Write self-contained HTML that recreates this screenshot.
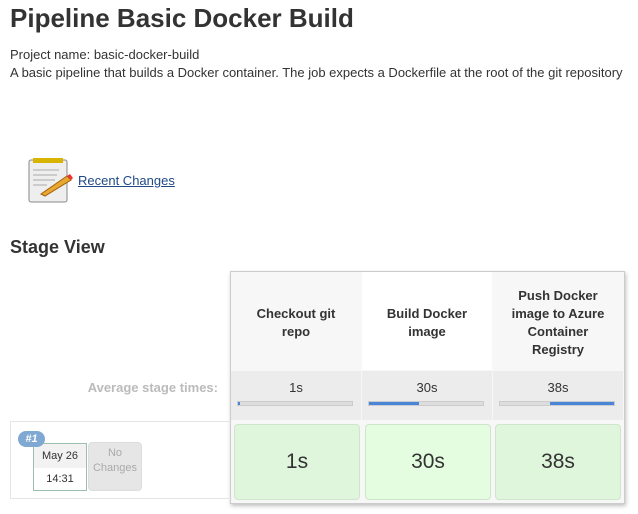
<!DOCTYPE html>
<html><head><style>
body{margin:0;width:638px;height:514px;background:#fff;font-family:"Liberation Sans",sans-serif;color:#333;position:relative;overflow:hidden}
.a{position:absolute}
h1{position:absolute;left:10px;top:3px;margin:0;font-size:26px;font-weight:bold;white-space:nowrap}
.t{font-size:13px;white-space:nowrap;left:10px}
.hd{position:absolute;top:274px;height:98px;width:130px;font-size:13px;font-weight:bold;text-align:center;display:flex;align-items:center;justify-content:center;line-height:18px;color:#333}
.av{position:absolute;top:371px;height:49px;width:130px;background:#ececec;font-size:13px;text-align:center}
.bar{position:absolute;left:6px;top:30px;width:114px;height:3px;background:#ddd;border:1px solid #ccc}
.c{position:absolute;top:424px;height:74px;width:124px;border:1px solid #cfe5cc;border-radius:4px;background:#dff6dc;font-size:21px;display:flex;align-items:center;justify-content:center}
</style></head><body>
<h1>Pipeline Basic Docker Build</h1>
<div class="a t" style="top:47px">Project name: basic-docker-build</div>
<div class="a t" style="top:65px">A basic pipeline that builds a Docker container. The job expects a Dockerfile at the root of the git repository</div>
<svg class="a" style="left:27px;top:156px" width="48" height="48" viewBox="0 0 48 48">
<rect x="2" y="4" width="38" height="42" rx="2" fill="#eee" stroke="#888"/>
<rect x="6" y="2" width="30" height="5" fill="#d8b400"/>
<g stroke="#aaa"><line x1="6" y1="14" x2="32" y2="14"/><line x1="6" y1="19" x2="30" y2="19"/><line x1="6" y1="24" x2="28" y2="24"/><line x1="6" y1="29" x2="20" y2="29"/></g>
<path d="M14 38 L40 20 L44 24 L18 40 Z" fill="#e8a830" stroke="#a06010"/>
<path d="M40 20 L43 18 L46 22 L44 24Z" fill="#e33"/>
</svg>
<a class="a" style="left:78px;top:173px;font-size:13px;color:#204a87;text-decoration:underline">Recent Changes</a>
<div class="a" style="left:10px;top:237px;font-size:18px;font-weight:bold">Stage View</div>
<div class="a" style="left:230px;top:271px;width:393px;height:231px;border:1px solid #ccc;box-shadow:1px 2px 4px rgba(0,0,0,.25);background:#f7f7f7"></div>
<div class="a" style="left:362px;top:272px;width:130px;height:98px;background:#fff"></div>
<div class="hd" style="left:231px">Checkout git<br>repo</div>
<div class="hd" style="left:362px">Build Docker<br>image</div>
<div class="hd" style="left:493px">Push Docker<br>image to Azure<br>Container<br>Registry</div>
<div class="a" style="left:20px;top:380px;width:198px;text-align:right;font-size:13px;font-weight:bold;color:#bbb">Average stage times:</div>
<div class="av" style="left:231px"><div style="margin-top:9px">1s</div><div class="bar"><div style="width:2px;height:3px;background:#4a86d8"></div></div></div>
<div class="av" style="left:362px"><div style="margin-top:9px">30s</div><div class="bar"><div style="width:50px;height:3px;background:#4a86d8"></div></div></div>
<div class="av" style="left:493px"><div style="margin-top:9px">38s</div><div class="bar"><div style="margin-left:50px;width:64px;height:3px;background:#4a86d8"></div></div></div>
<div class="a" style="left:10px;top:421px;width:221px;height:76px;border-top:1px solid #e4e4e4;border-bottom:1px solid #e4e4e4;border-left:1px solid #e4e4e4"></div>
<div class="a" style="left:88px;top:442px;width:54px;height:49px;background:#e6e6e6;border:1px solid #ddd;border-radius:4px;font-size:11px;color:#aaa;text-align:center;line-height:15px;padding-top:3px;box-sizing:border-box">No<br>Changes</div>
<div class="a" style="left:33px;top:443px;width:54px;height:48px;background:#fff;border:1px solid #9cbfae;box-sizing:border-box;font-size:11px;text-align:center">
<div style="background:#f2f2f2;height:24px;line-height:24px">May 26</div><div style="line-height:22px">14:31</div></div>
<div class="a" style="left:18px;top:431px;width:27px;height:16px;border-radius:8px;background:#7fa8d2;color:#fff;font-size:11px;font-weight:bold;font-style:italic;text-align:center;line-height:16px">#1</div>
<div class="c" style="left:234px">1s</div>
<div class="c" style="left:365px;background:#e4fde0">30s</div>
<div class="c" style="left:495px">38s</div>
</body></html>
